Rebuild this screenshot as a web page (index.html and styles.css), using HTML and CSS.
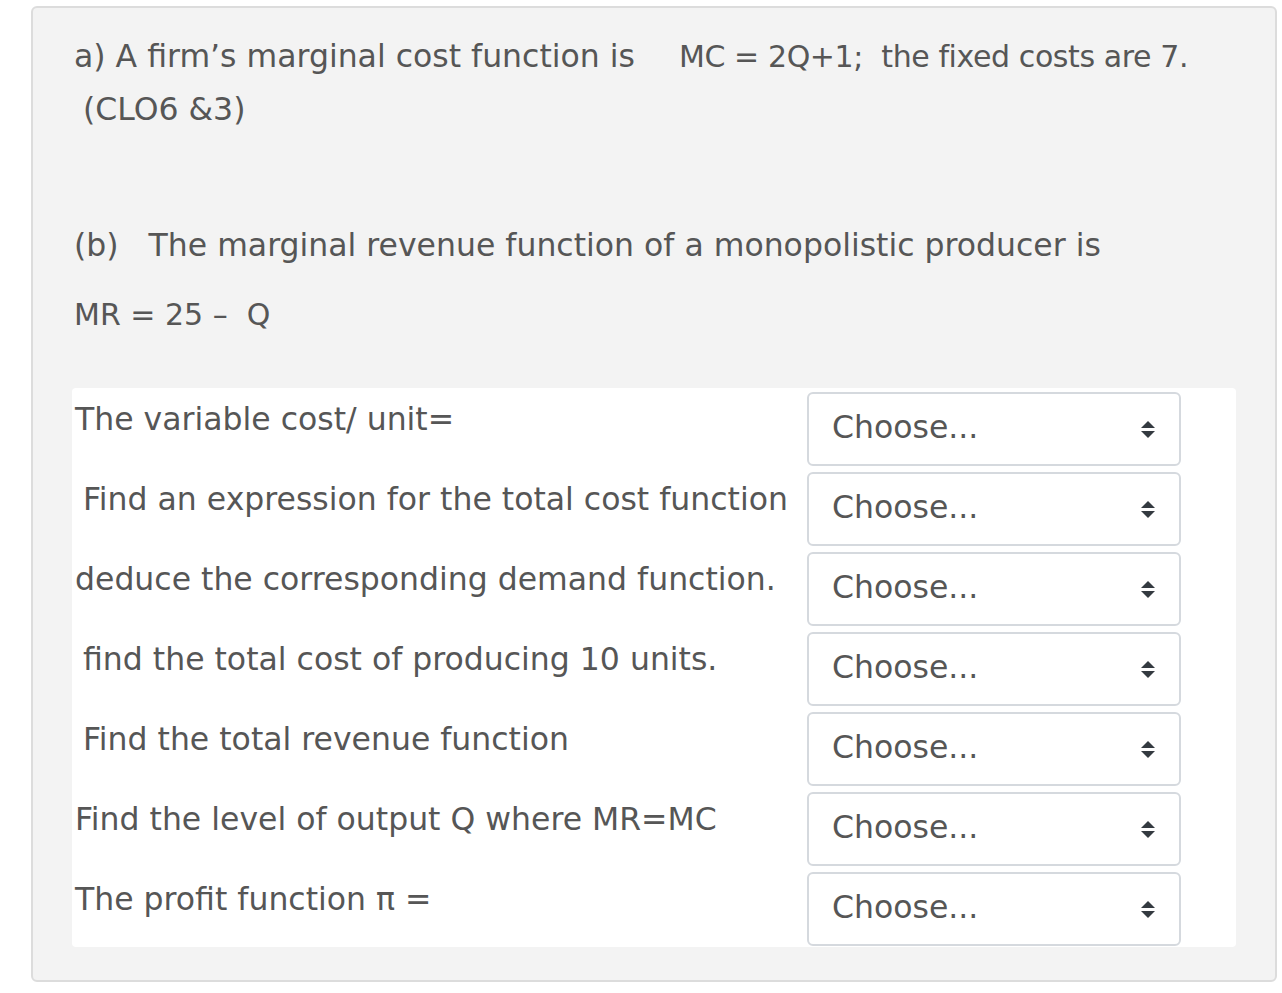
FILE: index.html
```html
<!DOCTYPE html>
<html lang="en">
<head>
<meta charset="utf-8">
<title>Question</title>
<link rel="stylesheet" href="styles.css">
</head>
<body>
<div class="card">
  <div class="intro">
    <p class="line1"><span>a) A firm’s marginal cost function is</span><span class="mc">MC = 2Q+1;&nbsp; the fixed costs are 7.</span></p>
    <p class="line2">(CLO6 &amp;3)</p>
  </div>
  <p class="lineb"><span class="tag">(b)</span>The marginal revenue function of a monopolistic producer is</p>
  <p class="linemr">MR = 25 –&nbsp; Q</p>
  <div class="answers">
    <div class="label">The variable cost/ unit=</div>
    <div class="select"><span>Choose...</span><span class="arrows"><i class="up"></i><i class="down"></i></span></div>
    <div class="label indent">Find an expression for the total cost function</div>
    <div class="select"><span>Choose...</span><span class="arrows"><i class="up"></i><i class="down"></i></span></div>
    <div class="label">deduce the corresponding demand function.</div>
    <div class="select"><span>Choose...</span><span class="arrows"><i class="up"></i><i class="down"></i></span></div>
    <div class="label indent">find the total cost of producing 10 units.</div>
    <div class="select"><span>Choose...</span><span class="arrows"><i class="up"></i><i class="down"></i></span></div>
    <div class="label indent">Find the total revenue function</div>
    <div class="select"><span>Choose...</span><span class="arrows"><i class="up"></i><i class="down"></i></span></div>
    <div class="label">Find the level of output Q where MR=MC</div>
    <div class="select"><span>Choose...</span><span class="arrows"><i class="up"></i><i class="down"></i></span></div>
    <div class="label">The profit function π =</div>
    <div class="select"><span>Choose...</span><span class="arrows"><i class="up"></i><i class="down"></i></span></div>
  </div>
</div>
</body>
</html>
```
FILE: styles.css
```css
html, body {
  margin: 0;
  padding: 0;
  background: #ffffff;
}
body {
  font-family: "DejaVu Sans", "Open Sans", sans-serif;
  color: #565656;
  font-size: 31.5px;
  padding: 6px 5px 0 31px;
}
p { margin: 0; }
.card {
  background: #f3f3f3;
  border: 2px solid #dcdcdc;
  border-radius: 6px;
  height: 976px;
  box-sizing: border-box;
  padding: 28px 39px 0 39px;
}
.line1 {
  display: flex;
  align-items: baseline;
  line-height: 40px;
  padding-left: 2px;
}
.line1 .mc {
  margin-left: 44px;
  font-size: 30px;
  letter-spacing: -0.4px;
}
.line2 {
  margin-top: 12px;
  line-height: 40px;
  padding-left: 11px;
}
.lineb {
  margin-top: 96px;
  line-height: 40px;
  padding-left: 2px;
}
.lineb .tag { margin-right: 30px; }
.linemr {
  margin-top: 30px;
  line-height: 40px;
  padding-left: 2px;
  font-size: 30px;
}
.answers {
  margin-top: 53px;
  background: #ffffff;
  border-radius: 4px;
  padding: 4px 0 1px 3px;
  display: grid;
  grid-template-columns: 732px 374px;
  row-gap: 6px;
}
.label {
  padding-top: 7px;
  line-height: 40px;
  white-space: nowrap;
}
.label.indent { padding-left: 8px; }
.select {
  height: 74px;
  box-sizing: border-box;
  border: 2px solid #d5d9de;
  border-radius: 6px;
  display: flex;
  align-items: center;
  justify-content: space-between;
  padding: 0 24px 4px 23px;
}
.arrows {
  display: flex;
  flex-direction: column;
  gap: 3px;
  margin-top: 4px;
}
.arrows i {
  display: block;
  width: 0;
  height: 0;
  border-left: 7px solid transparent;
  border-right: 7px solid transparent;
}
.arrows .up { border-bottom: 7px solid #343a40; }
.arrows .down { border-top: 7px solid #343a40; }
```
